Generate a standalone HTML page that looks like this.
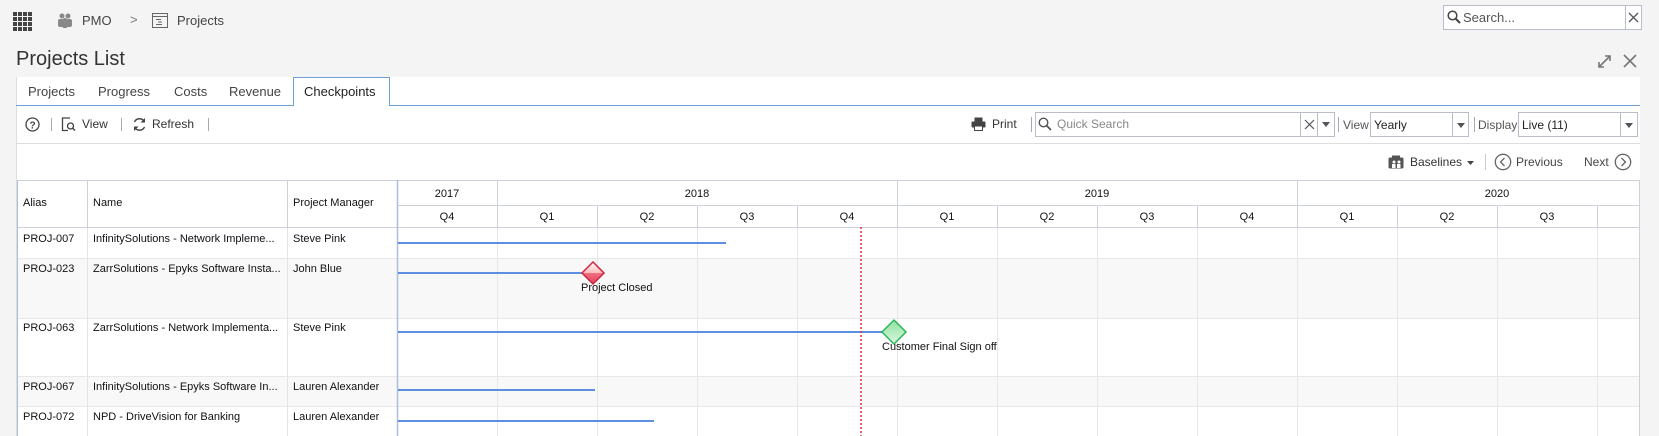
<!DOCTYPE html>
<html><head><meta charset="utf-8"><style>
*{margin:0;padding:0;box-sizing:border-box}
body{width:1659px;height:436px;overflow:hidden;background:#f4f4f4;font-family:"Liberation Sans",sans-serif;color:#333;position:relative}
.a{position:absolute;white-space:nowrap}
.t13{font-size:13px}
.panel{position:absolute;left:16px;top:77px;width:1624px;height:359px;background:#fff;border-left:1px solid #ddd}
.sel{position:absolute;border:1px solid #b8bccb;background:#fff;height:25px;font-size:12px;color:#222}
.tb{font-size:12px;color:#333}
.cell{position:absolute;font-size:11px;color:#111;white-space:nowrap;overflow:hidden}
</style></head><body>
<!-- top bar -->
<svg class="a" style="left:13px;top:12px" width="20" height="20" viewBox="0 0 20 20"><g fill="#444">
<rect x="0" y="0" width="4" height="4"/><rect x="5" y="0" width="4" height="4"/><rect x="10" y="0" width="4" height="4"/><rect x="15" y="0" width="4" height="4"/>
<rect x="0" y="5" width="4" height="4"/><rect x="5" y="5" width="4" height="4"/><rect x="10" y="5" width="4" height="4"/><rect x="15" y="5" width="4" height="4"/>
<rect x="0" y="10" width="4" height="4"/><rect x="5" y="10" width="4" height="4"/><rect x="10" y="10" width="4" height="4"/><rect x="15" y="10" width="4" height="4"/>
<rect x="0" y="15" width="4" height="4"/><rect x="5" y="15" width="4" height="4"/><rect x="10" y="15" width="4" height="4"/><rect x="15" y="15" width="4" height="4"/></g></svg>
<svg class="a" style="left:57px;top:13px" width="16" height="15" viewBox="0 0 16 15"><g fill="#888"><circle cx="5" cy="3" r="2.5"/><circle cx="11" cy="3" r="2.5"/><rect x="1" y="6" width="6" height="8" rx="2"/><rect x="9" y="6" width="6" height="8" rx="2"/><circle cx="8" cy="7" r="2"/><rect x="5.5" y="9" width="5" height="6" rx="1.5"/></g></svg>
<div class="a t13" style="left:82px;top:13px;color:#444">PMO</div>
<div class="a t13" style="left:130px;top:12px;color:#777">&gt;</div>
<svg class="a" style="left:152px;top:13px" width="16" height="15" viewBox="0 0 16 15"><rect x="0.5" y="0.5" width="15" height="14" fill="none" stroke="#666"/><line x1="0.5" y1="3.5" x2="15.5" y2="3.5" stroke="#666"/><path d="M4 6.5h5M6 9h4M4 11.5h6" stroke="#666"/></svg>
<div class="a t13" style="left:177px;top:13px;color:#444">Projects</div>
<div class="a" style="left:1443px;top:5px;width:199px;height:25px;border:1px solid #b8bccb;background:#fff"></div>
<svg class="a" style="left:1447px;top:10px" width="14" height="14" viewBox="0 0 14 14"><circle cx="5.5" cy="5.5" r="4.3" fill="none" stroke="#444" stroke-width="1.5"/><line x1="8.5" y1="8.5" x2="13" y2="13" stroke="#444" stroke-width="2"/></svg>
<div class="a t13" style="left:1463px;top:10px;color:#555">Search...</div>
<div class="a" style="left:1625px;top:5px;width:1px;height:25px;background:#b8bccb"></div>
<svg class="a" style="left:1628px;top:12px" width="11" height="11"><path d="M1 1L10 10M10 1L1 10" stroke="#555" stroke-width="1.3"/></svg>
<div class="a" style="left:16px;top:48px;font-size:20px;color:#333">Projects List</div>
<svg class="a" style="left:1597px;top:54px" width="15" height="15"><path d="M2 13L13 2M8 2h5v5M2 8v5h5" stroke="#777" stroke-width="1.6" fill="none"/></svg>
<svg class="a" style="left:1623px;top:54px" width="14" height="14"><path d="M1 1L13 13M13 1L1 13" stroke="#777" stroke-width="1.6"/></svg>

<div class="panel"></div>
<!-- tabs -->
<div class="a" style="left:16px;top:105px;width:1624px;height:1px;background:#6f9fd6"></div>
<div class="a" style="left:293px;top:77px;width:97px;height:29px;border:1px solid #6f9fd6;border-bottom:none;background:#fff"></div>
<div class="a t13" style="left:28px;top:84px;color:#444">Projects</div>
<div class="a t13" style="left:98px;top:84px;color:#444">Progress</div>
<div class="a t13" style="left:174px;top:84px;color:#444">Costs</div>
<div class="a t13" style="left:229px;top:84px;color:#444">Revenue</div>
<div class="a t13" style="left:304px;top:84px;color:#222">Checkpoints</div>
<!-- toolbar -->
<svg class="a" style="left:25px;top:117px" width="15" height="15"><circle cx="7.5" cy="7.5" r="6.5" fill="none" stroke="#444" stroke-width="1.3"/><text x="7.5" y="11.3" font-size="10" font-family="Liberation Sans" text-anchor="middle" fill="#444" font-weight="bold">?</text></svg>
<div class="a" style="left:51px;top:118px;width:1px;height:13px;background:#aaa"></div>
<svg class="a" style="left:61px;top:117px" width="15" height="15"><path d="M9 1H1.5v12.5H7" fill="none" stroke="#444" stroke-width="1.3"/><circle cx="9.5" cy="9" r="3" fill="none" stroke="#444" stroke-width="1.3"/><path d="M11.5 11l2.5 2.5" stroke="#444" stroke-width="1.5"/></svg>
<div class="a tb" style="left:82px;top:117px">View</div>
<div class="a" style="left:121px;top:118px;width:1px;height:13px;background:#aaa"></div>
<svg class="a" style="left:132px;top:117px" width="15" height="15"><path d="M12.5 5A5.5 5.5 0 0 0 2.5 5M2.5 10A5.5 5.5 0 0 0 12.5 10" fill="none" stroke="#444" stroke-width="1.5"/><path d="M13 1v4.5H8.5z M2 14V9.5h4.5z" fill="#444"/></svg>
<div class="a tb" style="left:152px;top:117px">Refresh</div>
<div class="a" style="left:208px;top:118px;width:1px;height:13px;background:#aaa"></div>

<svg class="a" style="left:971px;top:117px" width="15" height="14"><rect x="3.5" y="0.5" width="8" height="4" fill="#444"/><rect x="0.5" y="4.5" width="14" height="6" rx="1" fill="#444"/><rect x="3.5" y="9" width="8" height="4.5" fill="#fff" stroke="#444"/></svg>
<div class="a tb" style="left:992px;top:117px">Print</div>
<div class="a" style="left:1031px;top:117px;width:1px;height:15px;background:#aaa"></div>
<div class="sel" style="left:1035px;top:112px;width:300px"></div>
<svg class="a" style="left:1038px;top:117px" width="14" height="14"><circle cx="5.5" cy="5.5" r="4.3" fill="none" stroke="#555" stroke-width="1.4"/><line x1="8.5" y1="8.5" x2="13" y2="13" stroke="#555" stroke-width="1.8"/></svg>
<div class="a tb" style="left:1057px;top:117px;color:#888">Quick Search</div>
<div class="a" style="left:1300px;top:112px;width:1px;height:25px;background:#b8bccb"></div>
<div class="a" style="left:1317px;top:112px;width:1px;height:25px;background:#b8bccb"></div>
<svg class="a" style="left:1304px;top:119px" width="11" height="11"><path d="M1 1L10 10M10 1L1 10" stroke="#555" stroke-width="1.2"/></svg>
<svg class="a" style="left:1322px;top:122px" width="9" height="5"><path d="M0 0h8L4 5z" fill="#555"/></svg>
<div class="a" style="left:1338px;top:117px;width:1px;height:15px;background:#aaa"></div>
<div class="a tb" style="left:1343px;top:118px;color:#555">View</div>
<div class="sel" style="left:1370px;top:112px;width:99px"><span style="position:absolute;left:3px;top:5px">Yearly</span><span style="position:absolute;left:81px;top:0;width:1px;height:23px;background:#b8bccb"></span><svg style="position:absolute;left:86px;top:10px" width="9" height="5"><path d="M0 0h8L4 5z" fill="#555"/></svg></div>
<div class="a" style="left:1474px;top:117px;width:1px;height:15px;background:#aaa"></div>
<div class="a tb" style="left:1478px;top:118px;color:#555">Display</div>
<div class="sel" style="left:1518px;top:112px;width:120px"><span style="position:absolute;left:3px;top:5px">Live (11)</span><span style="position:absolute;left:101px;top:0;width:1px;height:23px;background:#b8bccb"></span><svg style="position:absolute;left:106px;top:10px" width="9" height="5"><path d="M0 0h8L4 5z" fill="#555"/></svg></div>
<div class="a" style="left:16px;top:143px;width:1624px;height:1px;background:#ddd"></div>
<!-- baselines row -->
<svg class="a" style="left:1388px;top:155px" width="16" height="14"><rect x="0.5" y="2.5" width="15" height="11" rx="1.5" fill="#555"/><rect x="4" y="0.5" width="8" height="3" fill="#555"/><circle cx="6" cy="7" r="1.5" fill="#fff"/><circle cx="11" cy="7" r="1.5" fill="#fff"/><rect x="4" y="9" width="3.5" height="4" fill="#fff"/><rect x="9" y="9" width="3.5" height="4" fill="#fff"/></svg>
<div class="a tb" style="left:1410px;top:155px">Baselines</div>
<svg class="a" style="left:1467px;top:161px" width="7" height="4"><path d="M0 0h7L3.5 4z" fill="#444"/></svg>
<div class="a" style="left:1485px;top:154px;width:1px;height:16px;background:#ccc"></div>
<svg class="a" style="left:1494px;top:153px" width="18" height="18"><circle cx="9" cy="9" r="7.7" fill="none" stroke="#666" stroke-width="1.3"/><path d="M10.5 5L6.5 9l4 4" fill="none" stroke="#666" stroke-width="1.3"/></svg>
<div class="a tb" style="left:1516px;top:155px;color:#444">Previous</div>
<div class="a tb" style="left:1584px;top:155px;color:#444">Next</div>
<svg class="a" style="left:1614px;top:153px" width="18" height="18"><circle cx="9" cy="9" r="7.7" fill="none" stroke="#666" stroke-width="1.3"/><path d="M7.5 5l4 4-4 4" fill="none" stroke="#666" stroke-width="1.3"/></svg>

<!-- table -->
<svg class="a" style="left:0;top:0" width="1659" height="436">
<g>
<rect x="17" y="258" width="1623" height="60" fill="#f8f8f8"/>
<rect x="17" y="376" width="1623" height="30" fill="#f8f8f8"/>
</g>
<g stroke="#e8e8e8" stroke-width="1">
<path d="M497.5 227V436M597.5 227V436M697.5 227V436M797.5 227V436M897.5 227V436M997.5 227V436M1097.5 227V436M1197.5 227V436M1297.5 227V436M1397.5 227V436M1497.5 227V436M1597.5 227V436"/>
<path d="M17 258.5H1640M17 318.5H1640M17 376.5H1640M17 406.5H1640"/>
<path d="M87.5 227V436M287.5 227V436" stroke="#e4e4e4"/>
</g>
<g stroke="#cdd2da">
<path d="M17 180.5H1640M17 227.5H1640M397 205.5H1640"/>
<path d="M87.5 180V227M287.5 180V227M497.5 180V227M897.5 180V227M1297.5 180V227"/>
<path d="M597.5 205V227M697.5 205V227M797.5 205V227M997.5 205V227M1097.5 205V227M1197.5 205V227M1397.5 205V227M1497.5 205V227M1597.5 205V227"/>
<path d="M1639.5 180V436"/>
</g>
<path d="M17.5 180V436" stroke="#a9bfdc"/>
<path d="M397.5 180V436" stroke="#a9bfdc" stroke-width="1.5"/>
<g font-family="Liberation Sans" font-size="11" fill="#111" text-anchor="middle">
<text x="447" y="197">2017</text><text x="697" y="197">2018</text><text x="1097" y="197">2019</text><text x="1497" y="197">2020</text>
<text x="447" y="220">Q4</text><text x="547" y="220">Q1</text><text x="647" y="220">Q2</text><text x="747" y="220">Q3</text><text x="847" y="220">Q4</text>
<text x="947" y="220">Q1</text><text x="1047" y="220">Q2</text><text x="1147" y="220">Q3</text><text x="1247" y="220">Q4</text>
<text x="1347" y="220">Q1</text><text x="1447" y="220">Q2</text><text x="1547" y="220">Q3</text>
</g>
<g stroke="#5b8fe0" stroke-width="2">
<path d="M398 243H726M398 273H586M398 332H884M398 390H595M398 421H654"/>
</g>
<path d="M861 227V436" stroke="#e03030" stroke-width="1.5" stroke-dasharray="2,2"/>
<defs>
<linearGradient id="r" x1="0" y1="0" x2="0" y2="1"><stop offset="0" stop-color="#fff"/><stop offset=".5" stop-color="#fbb"/><stop offset=".5" stop-color="#f07080"/><stop offset="1" stop-color="#e04060"/></linearGradient>
<linearGradient id="g" x1="0" y1="0" x2="0" y2="1"><stop offset="0" stop-color="#8fe0a0"/><stop offset="1" stop-color="#d8f8e0"/></linearGradient>
</defs>
<path d="M593 262L604 273L593 284L582 273Z" fill="url(#r)" stroke="#d0243c" stroke-width="1.5"/>
<path d="M894 320L906 332L894 344L882 332Z" fill="url(#g)" stroke="#2eb55a" stroke-width="1.5"/>
<g font-family="Liberation Sans" font-size="11" fill="#111">
<text x="581" y="291">Project Closed</text>
<text x="882" y="350">Customer Final Sign off</text>
</g>
</svg>
<div class="cell" style="left:23px;top:197px">Alias</div>
<div class="cell" style="left:93px;top:197px">Name</div>
<div class="cell" style="left:293px;top:197px">Project Manager</div>

<div class="cell" style="left:23px;top:233px">PROJ-007</div>
<div class="cell" style="left:93px;top:233px;width:190px">InfinitySolutions - Network Impleme...</div>
<div class="cell" style="left:293px;top:233px">Steve Pink</div>
<div class="cell" style="left:23px;top:263px">PROJ-023</div>
<div class="cell" style="left:93px;top:263px;width:190px">ZarrSolutions - Epyks Software Insta...</div>
<div class="cell" style="left:293px;top:263px">John Blue</div>
<div class="cell" style="left:23px;top:322px">PROJ-063</div>
<div class="cell" style="left:93px;top:322px;width:190px">ZarrSolutions - Network Implementa...</div>
<div class="cell" style="left:293px;top:322px">Steve Pink</div>
<div class="cell" style="left:23px;top:381px">PROJ-067</div>
<div class="cell" style="left:93px;top:381px;width:190px">InfinitySolutions - Epyks Software In...</div>
<div class="cell" style="left:293px;top:381px">Lauren Alexander</div>
<div class="cell" style="left:23px;top:411px">PROJ-072</div>
<div class="cell" style="left:93px;top:411px;width:190px">NPD - DriveVision for Banking</div>
<div class="cell" style="left:293px;top:411px">Lauren Alexander</div>
</body></html>
